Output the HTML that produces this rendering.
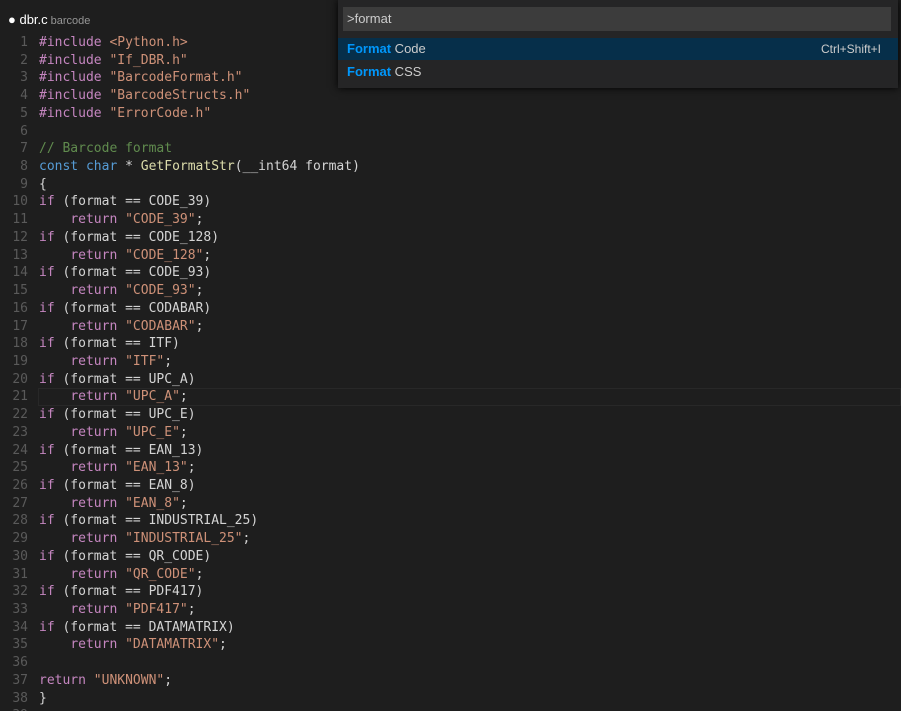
<!DOCTYPE html>
<html><head><meta charset="utf-8"><style>
html,body{margin:0;padding:0;background:#1e1e1e;width:901px;height:711px;overflow:hidden}
body{position:relative;font-family:"DejaVu Sans Mono","Liberation Mono",monospace}
.tab{position:absolute;left:8px;top:12px;font:13px "Liberation Sans",sans-serif;color:#fff}
.tab small{font-size:11px;color:#969696;margin-left:3px}
.code{position:absolute;left:0;top:34px;width:901px;font-size:13px;line-height:17.73px}
.l{height:17.73px;white-space:pre;position:relative}
.n{display:inline-block;width:28px;text-align:right;color:#5a5a5a;margin-right:11px}
.t{color:#d4d4d4}
.k{color:#c586c0}.s{color:#ce9178}.c{color:#608b4e}.b{color:#569cd6}.f{color:#dcdcaa}
.cur{position:absolute;left:38px;right:0;top:0;height:16px;border:1px solid #282828}
.qp{position:absolute;left:338px;top:0;width:560px;height:88px;background:#252526;box-shadow:0 0 8px #000}
.inp{position:absolute;left:5px;top:7px;width:548px;height:24px;background:#3c3c3c;color:#ccc;font:13px "Liberation Sans",sans-serif;line-height:24px;box-sizing:border-box;padding-left:4px}
.it{position:absolute;left:0;width:560px;height:22px;font:13px "Liberation Sans",sans-serif;line-height:22px;color:#ccc;box-sizing:border-box;padding-left:9px}
.it b{color:#0097fb}
.sel{background:#062f4a}
.kb{position:absolute;right:17px;top:0;color:#ccc;font-size:12px}
</style></head><body>
<div class="tab">● dbr.c<small>barcode</small></div>
<div class="code">
<div class="l"><span class="n">1</span><span class="k">#include</span> <span class="s">&lt;Python.h&gt;</span></div>
<div class="l"><span class="n">2</span><span class="k">#include</span> <span class="s">"If_DBR.h"</span></div>
<div class="l"><span class="n">3</span><span class="k">#include</span> <span class="s">"BarcodeFormat.h"</span></div>
<div class="l"><span class="n">4</span><span class="k">#include</span> <span class="s">"BarcodeStructs.h"</span></div>
<div class="l"><span class="n">5</span><span class="k">#include</span> <span class="s">"ErrorCode.h"</span></div>
<div class="l"><span class="n">6</span></div>
<div class="l"><span class="n">7</span><span class="c">// Barcode format</span></div>
<div class="l"><span class="n">8</span><span class="b">const</span> <span class="b">char</span><span class="t"> * </span><span class="f">GetFormatStr</span><span class="t">(__int64 format)</span></div>
<div class="l"><span class="n">9</span><span class="t">{</span></div>
<div class="l"><span class="n">10</span><span class="k">if</span><span class="t"> (format == CODE_39)</span></div>
<div class="l"><span class="n">11</span>    <span class="k">return</span> <span class="s">"CODE_39"</span><span class="t">;</span></div>
<div class="l"><span class="n">12</span><span class="k">if</span><span class="t"> (format == CODE_128)</span></div>
<div class="l"><span class="n">13</span>    <span class="k">return</span> <span class="s">"CODE_128"</span><span class="t">;</span></div>
<div class="l"><span class="n">14</span><span class="k">if</span><span class="t"> (format == CODE_93)</span></div>
<div class="l"><span class="n">15</span>    <span class="k">return</span> <span class="s">"CODE_93"</span><span class="t">;</span></div>
<div class="l"><span class="n">16</span><span class="k">if</span><span class="t"> (format == CODABAR)</span></div>
<div class="l"><span class="n">17</span>    <span class="k">return</span> <span class="s">"CODABAR"</span><span class="t">;</span></div>
<div class="l"><span class="n">18</span><span class="k">if</span><span class="t"> (format == ITF)</span></div>
<div class="l"><span class="n">19</span>    <span class="k">return</span> <span class="s">"ITF"</span><span class="t">;</span></div>
<div class="l"><span class="n">20</span><span class="k">if</span><span class="t"> (format == UPC_A)</span></div>
<div class="l"><div class="cur"></div><span class="n">21</span>    <span class="k">return</span> <span class="s">"UPC_A"</span><span class="t">;</span></div>
<div class="l"><span class="n">22</span><span class="k">if</span><span class="t"> (format == UPC_E)</span></div>
<div class="l"><span class="n">23</span>    <span class="k">return</span> <span class="s">"UPC_E"</span><span class="t">;</span></div>
<div class="l"><span class="n">24</span><span class="k">if</span><span class="t"> (format == EAN_13)</span></div>
<div class="l"><span class="n">25</span>    <span class="k">return</span> <span class="s">"EAN_13"</span><span class="t">;</span></div>
<div class="l"><span class="n">26</span><span class="k">if</span><span class="t"> (format == EAN_8)</span></div>
<div class="l"><span class="n">27</span>    <span class="k">return</span> <span class="s">"EAN_8"</span><span class="t">;</span></div>
<div class="l"><span class="n">28</span><span class="k">if</span><span class="t"> (format == INDUSTRIAL_25)</span></div>
<div class="l"><span class="n">29</span>    <span class="k">return</span> <span class="s">"INDUSTRIAL_25"</span><span class="t">;</span></div>
<div class="l"><span class="n">30</span><span class="k">if</span><span class="t"> (format == QR_CODE)</span></div>
<div class="l"><span class="n">31</span>    <span class="k">return</span> <span class="s">"QR_CODE"</span><span class="t">;</span></div>
<div class="l"><span class="n">32</span><span class="k">if</span><span class="t"> (format == PDF417)</span></div>
<div class="l"><span class="n">33</span>    <span class="k">return</span> <span class="s">"PDF417"</span><span class="t">;</span></div>
<div class="l"><span class="n">34</span><span class="k">if</span><span class="t"> (format == DATAMATRIX)</span></div>
<div class="l"><span class="n">35</span>    <span class="k">return</span> <span class="s">"DATAMATRIX"</span><span class="t">;</span></div>
<div class="l"><span class="n">36</span></div>
<div class="l"><span class="n">37</span><span class="k">return</span> <span class="s">"UNKNOWN"</span><span class="t">;</span></div>
<div class="l"><span class="n">38</span><span class="t">}</span></div>
<div class="l"><span class="n">39</span></div>
</div>
<div class="qp">
<div class="inp">&gt;format</div>
<div class="it sel" style="top:38px"><b>Format</b> Code<span class="kb">Ctrl+Shift+I</span></div>
<div class="it" style="top:61px"><b>Format</b> CSS</div>
</div>
</body></html>
